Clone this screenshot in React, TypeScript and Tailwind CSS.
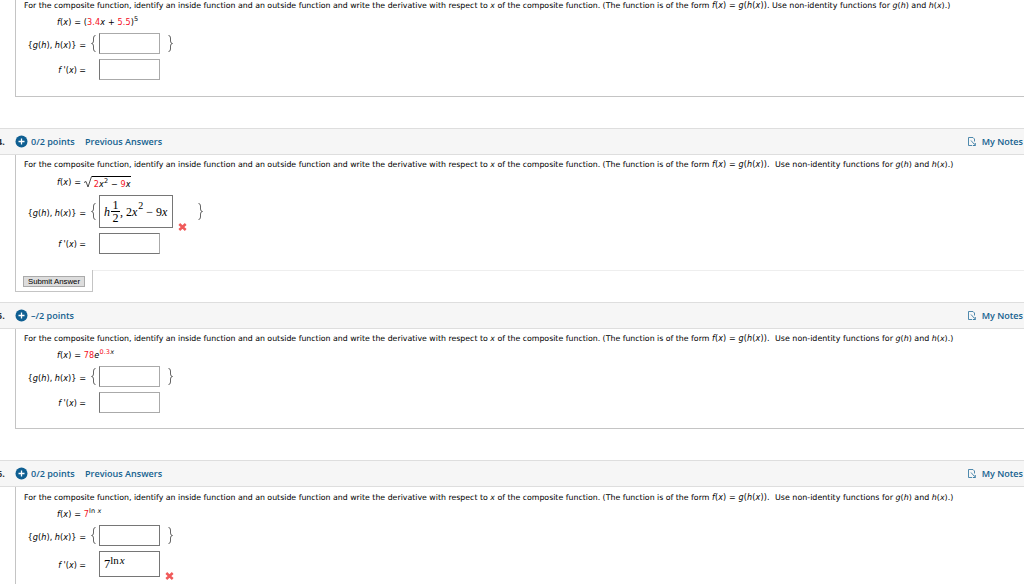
import { ReactNode } from "react";
import { clsx } from "clsx";

function Fx() {
  return (
    <span>
      <i>f</i>(<i>x</i>)
    </span>
  );
}

function Prompt({ tight }: { tight?: boolean }) {
  return (
    <div className="flex h-[18px] items-center whitespace-pre pl-2 pt-[2px] text-[8px] leading-none">
      <span className="w-[688px] text-[7.82px]">
        For the composite function, identify an inside function and an outside
        function and write the derivative with respect to <i>x</i> of the
        composite function. (The function is of the form
      </span>
      <span
        className={clsx("tracking-[0.13px]", tight ? "w-[60px]" : "w-[63px]")}
      >
        <Fx /> = <i>g</i>(<i>h</i>(<i>x</i>)).
      </span>
      <span className="text-[7.95px]">
        Use non-identity functions for <i>g</i>(<i>h</i>) and <i>h</i>(<i>x</i>
        ).)
      </span>
    </div>
  );
}

function Formula({ children, tall }: { children: ReactNode; tall?: boolean }) {
  return (
    <div
      className={clsx(
        "flex items-center whitespace-pre pl-[41px] text-[8.1px] tracking-[0.12px]",
        tall ? "h-[18px]" : "h-[15px] pt-px"
      )}
    >
      <Fx />
      <span> = </span>
      {children}
    </div>
  );
}

function Brace({ close }: { close?: boolean }) {
  return (
    <svg
      width="5"
      height="17"
      viewBox="0 0 5 17"
      fill="none"
      stroke="#666"
      className={clsx("shrink-0", close && "-scale-x-100")}
    >
      <path d="M4.5 .5Q2.5.5 2.5 3V6Q2.5 8.5.5 8.5Q2.5 8.5 2.5 11V14Q2.5 16.5 4.5 16.5" />
    </svg>
  );
}

function Wrong() {
  return (
    <svg width="9" height="8" viewBox="0 0 9 8" className="shrink-0">
      <path d="M1.3 1L7.7 7M7.7 1L1.3 7" stroke="#f05a5a" strokeWidth="2.5" />
    </svg>
  );
}

interface AnswerProps {
  pair?: boolean;
  box?: string;
  wrong?: boolean;
  children?: ReactNode;
}

function Answer({
  pair,
  box = "h-[21px] w-[61px] border-t-[#aaa] border-r-[#aaa] border-b-[#aaa]",
  wrong,
  children,
}: AnswerProps) {
  return (
    <div className="flex items-center">
      <div className="flex w-[70px] shrink-0 justify-end whitespace-pre pt-[3px]">
        {pair ? (
          <span className="text-[8.2px]">
            {"{"}
            <i>g</i>(<i>h</i>), <i>h</i>(<i>x</i>){"}"} =
          </span>
        ) : (
          <span className="text-[8px]">
            <i>f</i> '(<i>x</i>) =
          </span>
        )}
      </div>
      <div className="flex w-[13px] shrink-0 pl-[5px]">{pair && <Brace />}</div>
      <div
        className={clsx(
          "flex shrink-0 items-center border border-[#767676] font-['Liberation_Serif',serif]",
          box
        )}
      >
        {children}
      </div>
      {wrong && (
        <div className="ml-[5px] h-[5px] self-end">
          <Wrong />
        </div>
      )}
      {pair && (
        <div className={wrong ? "ml-[11px]" : "ml-2"}>
          <Brace close />
        </div>
      )}
    </div>
  );
}

function QuestionHeader({
  number,
  points,
  previous,
}: {
  number: string;
  points: string;
  previous?: boolean;
}) {
  return (
    <div className="flex h-[27px] items-center border-y border-[#dedede] bg-[#f6f6f6] font-['Open_Sans',sans-serif] text-[9.05px] font-semibold text-[#14618f]">
      <span className="-ml-[3px] w-[18px] shrink-0 font-bold text-[#333]">
        {number}.
      </span>
      <svg width="13" height="13" viewBox="0 0 13 13" className="shrink-0">
        <circle cx="6.5" cy="6.5" r="6" fill="#0f5f92" />
        <path d="M3.5 6.5H9.5M6.5 3.5V9.5" stroke="white" strokeWidth="1.3" />
      </svg>
      <span className="ml-[3px] w-[54px]">{points}</span>
      {previous && <span>Previous Answers</span>}
      <div className="ml-auto flex items-center pr-px">
        <svg
          width="8"
          height="9"
          viewBox="0 0 8 9"
          fill="none"
          stroke="#3d7ea5"
          strokeWidth=".9"
          className="mr-[6px]"
        >
          <path d="M4 8.5H.5V.5H5L6.5 2V4.5M3 3.5L6.5 7.5" />
          <path d="M4.8 8.5H7.2V6" strokeWidth="1.1" />
        </svg>
        <span className="whitespace-nowrap">My Notes</span>
      </div>
    </div>
  );
}

function Body({ children, className }: { children: ReactNode; className: string }) {
  return (
    <div className={clsx("ml-[15px] border-l border-[#c4c4c4]", className)}>
      {children}
    </div>
  );
}

export default function App() {
  return (
    <div className="h-[584px] w-[1024px] overflow-hidden bg-white font-['DejaVu_Sans',sans-serif] text-[7.8px] leading-none text-black">
      <Body className="-mt-1 h-[101px] border-b">
        <Prompt tight />
        <Formula>
          <span>
            (<span className="text-[#f5101e]">3.4</span>
            <i>x</i> + <span className="text-[#f5101e]">5.5</span>)
          </span>
          <span className="-mt-[5px] text-[6.5px]">5</span>
        </Formula>
        <div className="mt-1 flex flex-col gap-[5px]">
          <Answer pair />
          <Answer />
        </div>
      </Body>

      <div className="mt-[31px]">
        <QuestionHeader number="4" points="0/2 points" previous />
        <Body className="h-[115px]">
          <Prompt />
          <Formula tall>
            <svg width="8" height="12" viewBox="0 0 8 12" fill="none" stroke="#222" strokeWidth=".8">
              <path d="M0 6.5L2 5.5L4 11L7.5.5H8" />
            </svg>
            <span className="flex h-3 items-center border-t border-black pl-[2px] pt-[3px]">
              <span className="text-[#f5101e]">2</span>
              <i>x</i>
              <span className="-mt-[5px] text-[6.5px]">2</span>
              <span> − </span>
              <span className="text-[#f5101e]">9</span>
              <i>x</i>
            </span>
          </Formula>
          <div className="mt-1 flex flex-col gap-[5px]">
            <Answer pair wrong box="h-[33px] w-[74px] pl-1">
              <div className="flex items-center whitespace-pre text-[12px]">
                <i>h</i>
                <span className="ml-px flex w-[9px] flex-col items-center">
                  <span className="w-full border-b border-black text-center">
                    1
                  </span>
                  <span>2</span>
                </span>
                <span>, 2</span>
                <i>x</i>
                <span className="-mt-[11px] ml-px text-[10px]">2</span>
                <span> − 9</span>
                <i>x</i>
              </div>
            </Answer>
            <Answer box="h-[21px] w-[61px] border-r-[#aaa]" />
          </div>
        </Body>
        <div className="flex h-[22px]">
          <div className="ml-[15px] flex w-[78px] shrink-0 items-start border-x border-b border-[#c4c4c4] pl-[7px] pt-[6px]">
            <button className="h-[11px] w-[62px] whitespace-nowrap border border-[#aaa] bg-[#ddd] font-['Liberation_Sans',sans-serif] text-[7.8px] leading-[9px]">
              Submit Answer
            </button>
          </div>
          <div className="grow border-t border-[#eee]" />
        </div>
      </div>

      <div className="mt-[10px]">
        <QuestionHeader number="5" points="–/2 points" />
        <Body className="h-[100px] border-b">
          <Prompt />
          <Formula>
            <span className="text-[#f5101e]">78</span>
            <i>e</i>
            <span className="-mt-[5px] text-[6.5px]">
              <span className="text-[#f5101e]">0.3</span>
              <i>x</i>
            </span>
          </Formula>
          <div className="mt-1 flex flex-col gap-[5px]">
            <Answer pair />
            <Answer />
          </div>
        </Body>
      </div>

      <div className="mt-[31px]">
        <QuestionHeader number="6" points="0/2 points" previous />
        <Body className="h-[100px] pt-px">
          <Prompt />
          <Formula>
            <span className="text-[#f5101e]">7</span>
            <span className="-mt-[5px] text-[6.5px]">
              ln <i>x</i>
            </span>
          </Formula>
          <div className="mt-1 flex flex-col gap-[5px]">
            <Answer pair box="h-[21px] w-[61px]" />
            <Answer wrong box="h-[26px] w-[61px] pl-1">
              <span className="text-[12.5px]">7</span>
              <span className="-mt-[7px] text-[11px]">
                ln<i className="ml-px">x</i>
              </span>
            </Answer>
          </div>
        </Body>
      </div>
    </div>
  );
}
